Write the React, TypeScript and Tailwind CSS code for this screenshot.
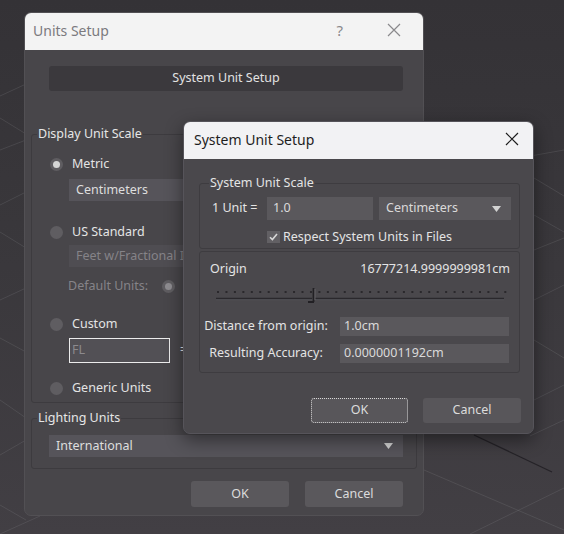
import React from "react";

function Radio({ checked, dim }: { checked?: boolean; dim?: boolean }) {
  return (
    <span className="w-[13px] h-[13px] rounded-full bg-[#5f5d61] flex items-center justify-center shrink-0">
      {checked && dim && <span className="w-[7px] h-[7px] rounded-full bg-[#8e8c90]" />}
      {checked && !dim && <span className="w-[7px] h-[7px] rounded-full bg-[#d6d6d6]" />}
    </span>
  );
}

function Arrow() {
  return (
    <svg width="9" height="6" viewBox="0 0 9 6" className="shrink-0">
      <path d="M0 0 L9 0 L4.5 6 Z" fill="#d2d2d2" />
    </svg>
  );
}

function CloseX({ color }: { color: string }) {
  return (
    <svg width="14" height="14" viewBox="0 0 14 14">
      <path d="M1 1 L13 13 M13 1 L1 13" stroke={color} strokeWidth="1.2" />
    </svg>
  );
}

function Slider() {
  const dots = [];
  for (let i = 0; i < 35; i++) {
    dots.push(<rect key={i} x={1 + i * 8.45} y={5} width={2} height={2} fill="#2a282c" />);
  }
  return (
    <svg width="292" height="17" viewBox="0 0 292 17">
      {dots}
      <line x1="0" y1="12.5" x2="96" y2="12.5" stroke="#2a282c" strokeWidth="1.3" />
      <line x1="99" y1="12.5" x2="288" y2="12.5" stroke="#2a282c" strokeWidth="1.3" />
      <line x1="0" y1="13.8" x2="288" y2="13.8" stroke="#56545a" strokeWidth="0.8" />
      <path d="M97.5 2 L97.5 16 M92 16 L98 16" stroke="#222024" strokeWidth="1.8" fill="none" />
      <line x1="99" y1="3" x2="99" y2="14" stroke="#6a686c" strokeWidth="0.8" />
    </svg>
  );
}

export default function App() {
  return (
    <div className="relative w-[564px] h-[534px] overflow-hidden bg-gradient-to-b from-[#343236] via-[#3a383c] to-[#423f44] font-['Noto_Sans',sans-serif] text-[12.5px] text-[#e4e4e4]">
      {/* viewport grid lines */}
      <svg className="absolute inset-0" width="564" height="534" viewBox="0 0 564 534">
        <g stroke="#8a878d" strokeOpacity="0.22" strokeWidth="1" fill="none">
          <line x1="0" y1="96" x2="26" y2="84" />
          <line x1="0" y1="118" x2="26" y2="134" />
          <line x1="0" y1="150" x2="26" y2="140" />
          <line x1="0" y1="205" x2="26" y2="192" />
          <line x1="0" y1="232" x2="26" y2="248" />
          <line x1="0" y1="300" x2="26" y2="288" />
          <line x1="0" y1="338" x2="26" y2="352" />
          <line x1="0" y1="400" x2="26" y2="418" />
          <line x1="0" y1="455" x2="26" y2="440" />
          <line x1="0" y1="505" x2="26" y2="520" />
          <line x1="424" y1="175" x2="564" y2="150" />
          <line x1="534" y1="178" x2="564" y2="196" />
          <line x1="534" y1="215" x2="564" y2="232" />
          <line x1="534" y1="250" x2="564" y2="238" />
          <line x1="534" y1="300" x2="564" y2="285" />
          <line x1="534" y1="340" x2="564" y2="358" />
          <line x1="534" y1="400" x2="564" y2="385" />
          <line x1="424" y1="470" x2="564" y2="530" />
          <line x1="470" y1="534" x2="564" y2="488" />
          <line x1="530" y1="436" x2="564" y2="420" />
          <line x1="0" y1="534" x2="40" y2="516" />
        </g>
        <line x1="474" y1="435" x2="552" y2="472" stroke="#1e1c20" strokeOpacity="0.8" strokeWidth="1.3" />
      </svg>

      {/* Units Setup dialog */}
      <div className="absolute left-[24px] top-[12px] w-[400px] h-[504px] rounded-[7px] overflow-hidden bg-[#48464a] border border-[#525054] flex flex-col">
        <div className="h-[37px] shrink-0 bg-[#f3f3f3] flex items-center pl-[8px] pr-[22px] pb-[3px]">
          <span className="text-[14px] text-[#7b7a7e] flex-1">Units Setup</span>
          <span className="text-[15px] text-[#8a898c] mr-[44px]">?</span>
          <CloseX color="#8a898c" />
        </div>
        <div className="flex flex-col">
          <div className="mt-[16px] ml-[24px] w-[354px] h-[25px] rounded-[3px] bg-[#3b393d] flex items-center justify-center text-[#e2e2e2]">
            System Unit Setup
          </div>

          <fieldset className="mt-[34px] mx-[6px] border border-[#3d3b3f] rounded-[3px] pb-[5px]">
            <legend className="ml-[5px] px-[1px] leading-[18px] text-[#e6e6e6]">Display Unit Scale</legend>
            <div className="pl-[18px] flex flex-col">
              <div className="mt-[12px] h-[18px] flex items-center gap-[9px]">
                <Radio checked />
                <span>Metric</span>
              </div>
              <div className="mt-[6px] ml-[19px] h-[22px] bg-[#56545a] flex items-center pl-[7px] text-[#dedede]">Centimeters</div>
              <div className="mt-[22px] h-[18px] flex items-center gap-[9px]">
                <Radio />
                <span>US Standard</span>
              </div>
              <div className="mt-[4px] ml-[19px] h-[22px] bg-[#4f4d52] flex items-center pl-[7px] text-[#858388]">Feet w/Fractional Inches</div>
              <div className="mt-[10px] ml-[18px] h-[18px] flex items-center text-[#858388]">
                <span className="w-[94px]">Default Units:</span>
                <Radio checked dim />
              </div>
              <div className="mt-[20px] h-[18px] flex items-center gap-[9px]">
                <Radio />
                <span>Custom</span>
              </div>
              <div className="mt-[5px] ml-[19px] h-[25px] flex items-center">
                <div className="w-[101px] h-[25px] border-[1.5px] border-[#ececec] bg-[#525055] flex items-center pl-[2px] text-[#8c8a8e]">FL</div>
                <span className="ml-[10px]">=</span>
              </div>
              <div className="mt-[16px] h-[18px] flex items-center gap-[9px]">
                <Radio />
                <span>Generic Units</span>
              </div>
            </div>
          </fieldset>

          <fieldset className="mt-[6px] mx-[6px] border border-[#3d3b3f] rounded-[3px] pb-[11px]">
            <legend className="ml-[5px] px-[1px] leading-[18px] text-[#e6e6e6]">Lighting Units</legend>
            <div className="mt-[8px] ml-[17px] mr-[13px] h-[22px] bg-[#56545a] flex items-center pl-[7px] pr-[10px] text-[#dedede]">
              <span className="flex-1">International</span>
              <Arrow />
            </div>
          </fieldset>

          <div className="mt-[12px] mr-[20px] flex justify-end gap-[16px]">
            <div className="w-[98px] h-[26px] rounded-[3px] bg-[#5a585c] flex items-center justify-center text-[#dcdcdc]">OK</div>
            <div className="w-[98px] h-[26px] rounded-[3px] bg-[#5a585c] flex items-center justify-center text-[#dcdcdc]">Cancel</div>
          </div>
        </div>
      </div>

      {/* System Unit Setup dialog */}
      <div className="absolute left-[183px] top-[121px] w-[351px] h-[313px] rounded-[7px] overflow-hidden bg-[#4a484c] border border-[#56545a] shadow-[0_6px_18px_rgba(0,0,0,0.45)] flex flex-col">
        <div className="h-[37px] shrink-0 bg-[#f2f2f4] flex items-center pl-[10px] pr-[14px] pb-[3px]">
          <span className="text-[14px] text-[#1e1e1e] flex-1">System Unit Setup</span>
          <CloseX color="#1e1e1e" />
        </div>
        <div className="flex flex-col">
          <fieldset className="mt-[15px] ml-[15px] mr-[13px] border border-[#3e3c40] rounded-[3px] pb-[2px]">
            <legend className="ml-[9px] px-[1px] leading-[18px] text-[#e4e4e4]">System Unit Scale</legend>
            <div className="pl-[12px] pr-[8px] flex flex-col">
              <div className="mt-[5px] h-[23px] flex items-center">
                <span className="w-[55px]">1 Unit =</span>
                <div className="w-[106px] h-[23px] bg-[#5a585c] flex items-center pl-[6px] text-[#dadada]">1.0</div>
                <div className="ml-[6px] w-[132px] h-[23px] bg-[#5a585c] flex items-center pl-[7px] pr-[10px] text-[#dadada]">
                  <span className="flex-1">Centimeters</span>
                  <Arrow />
                </div>
              </div>
              <div className="mt-[8px] h-[18px] flex items-center ml-[55px] gap-[3px]">
                <span className="w-[13px] h-[12px] bg-[#626064] flex items-center justify-center">
                  <svg width="9" height="8" viewBox="0 0 9 8">
                    <path d="M1 4.2 L3.4 6.6 L8 1" stroke="#d8d8d8" strokeWidth="1.6" fill="none" />
                  </svg>
                </span>
                <span>Respect System Units in Files</span>
              </div>
            </div>
          </fieldset>

          <div className="mt-[2px] ml-[15px] mr-[13px] border border-[#3e3c40] rounded-[3px] pt-[8px] pb-[9px] flex flex-col">
            <div className="h-[18px] flex items-center justify-between pl-[10px] pr-[9px]">
              <span>Origin</span>
              <span>16777214.9999999981cm</span>
            </div>
            <div className="mt-[8px] ml-[16px] h-[17px] flex items-center">
              <Slider />
            </div>
            <div className="mt-[14px] h-[19px] flex items-center">
              <span className="w-[132px] text-center">Distance from origin:</span>
              <div className="ml-[8px] w-[169px] h-[19px] bg-[#5a585c] flex items-center pl-[4px] text-[#dadada]">1.0cm</div>
            </div>
            <div className="mt-[8px] h-[19px] flex items-center">
              <span className="w-[132px] text-center">Resulting Accuracy:</span>
              <div className="ml-[8px] w-[169px] h-[19px] bg-[#5a585c] flex items-center pl-[4px] text-[#dadada]">0.0000001192cm</div>
            </div>
          </div>

          <div className="mt-[25px] mr-[12px] flex justify-end gap-[15px]">
            <div className="w-[97px] h-[25px] rounded-[3px] bg-[#58565a] border border-dotted border-[#d8d8d8] flex items-center justify-center text-[#dcdcdc]">OK</div>
            <div className="w-[98px] h-[25px] rounded-[3px] bg-[#58565a] flex items-center justify-center text-[#dcdcdc]">Cancel</div>
          </div>
        </div>
      </div>
    </div>
  );
}
